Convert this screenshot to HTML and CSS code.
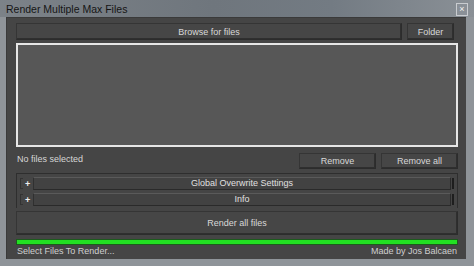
FILE: index.html
```html
<!DOCTYPE html>
<html>
<head>
<meta charset="utf-8">
<link rel="stylesheet" href="styles.css">
</head>
<body>
<div class="window">
  <div class="titlebar">
    <span class="title">Render Multiple Max Files</span>
    <span class="close">×</span>
  </div>
  <div class="frame">
    <div class="panel">
      <div class="row-top">
        <div class="btn browse">Browse for files</div>
        <div class="btn folder">Folder</div>
      </div>
      <div class="listbox"></div>
      <div class="row-mid">
        <span class="label">No files selected</span>
        <div class="btn remove">Remove</div>
        <div class="btn remove">Remove all</div>
      </div>
      <div class="rollouts">
        <div class="rollout"><span class="bracket"></span><span class="plus">+</span><span class="rtitle">Global Overwrite Settings</span><span class="rbar"></span></div>
        <div class="rollout"><span class="bracket"></span><span class="plus">+</span><span class="rtitle">Info</span><span class="rbar"></span></div>
      </div>
      <div class="btn render">Render all files</div>
      <div class="progress"><div class="fill"></div></div>
      <div class="status">
        <span>Select Files To Render...</span>
        <span>Made by Jos Balcaen</span>
      </div>
    </div>
  </div>
</div>
</body>
</html>
```
FILE: styles.css
```css
html, body {
  margin: 0;
  padding: 0;
}
body {
  width: 474px;
  height: 266px;
  overflow: hidden;
  background: #8e9398;
  font-family: "Liberation Sans", Arial, sans-serif;
  font-size: 9px;
}
.window {
  width: 474px;
  height: 266px;
  display: flex;
  flex-direction: column;
  background: #8f9499;
}
.titlebar {
  height: 17px;
  flex: none;
  display: flex;
  align-items: center;
  justify-content: space-between;
  padding: 0 6px 0 6px;
  background: linear-gradient(90deg, #7c8288 0%, #6f767d 45%, #737b83 70%, #8a9096 100%);
}
.title {
  color: #151515;
  font-size: 10.5px;
}
.close {
  width: 10px;
  height: 11px;
  margin-top: 2px;
  border: 1px solid #c9ccd0;
  background: #8a9097;
  color: #f2f2f2;
  font-size: 9px;
  line-height: 10px;
  text-align: center;
}
.frame {
  flex: 1;
  display: flex;
  padding: 0 8px 7px 6px;
}
.panel {
  flex: 1;
  display: flex;
  flex-direction: column;
  background: #454545;
  border-left: 1px solid #3a3a3a;
  border-top: 1px solid #3a3a3a;
  padding: 5px 8px 0 9px;
  color: #d6d6d6;
}
.btn {
  box-sizing: border-box;
  background: #464646;
  border: 1px solid #2c2c2c;
  border-top-color: #353535;
  border-left-color: #353535;
  box-shadow: inset -1px -1px 0 #2f2f2f;
  color: #d8d8d8;
  display: flex;
  align-items: center;
  justify-content: center;
}
.row-top {
  display: flex;
  gap: 5px;
  height: 17px;
  padding-right: 4px;
}
.browse {
  flex: 1;
}
.folder {
  width: 47px;
}
.listbox {
  margin-top: 3px;
  height: 104px;
  box-sizing: border-box;
  border: 2px solid #e6e6e6;
  background: #575757;
}
.row-mid {
  margin-top: 6px;
  height: 16px;
  display: flex;
  gap: 5px;
  align-items: center;
}
.label {
  flex: 1;
  margin-top: -4px;
  padding-left: 1px;
}
.remove {
  width: 77px;
  height: 16px;
}
.rollouts {
  margin-top: 4px;
  box-sizing: border-box;
  height: 35px;
  border: 1px solid #2e2e2e;
  border-bottom: none;
  padding: 3px 3px 0 3px;
  display: flex;
  flex-direction: column;
  gap: 3px;
}
.rollout {
  height: 13px;
  box-sizing: border-box;
  display: flex;
  align-items: center;
  position: relative;
  color: #e0e0e0;
}
.bracket {
  width: 3px;
  height: 11px;
  border: 1px solid #333;
  border-right: none;
  box-sizing: border-box;
  margin-right: 2px;
}
.plus {
  width: 8px;
  font-weight: bold;
  font-size: 9px;
  color: #f0f0f0;
  margin-right: 0;
}
.rtitle {
  flex: 1;
  height: 13px;
  box-sizing: border-box;
  border: 1px solid #5a5a5a;
  border-left: 1px solid #303030;
  border-right-color: #2a2a2a;
  border-bottom-color: #2a2a2a;
  background: #424242;
  display: flex;
  align-items: center;
  justify-content: center;
  line-height: 11px;
}
.rbar {
  width: 2px;
  height: 11px;
  margin-left: 1px;
  background: #1e1e1e;
}
.render {
  margin-top: 3px;
  height: 24px;
}
.progress {
  margin-top: 4px;
  height: 6px;
  box-sizing: border-box;
  border: 1px solid #1d5a1d;
  background: #1c4a1c;
}
.fill {
  height: 100%;
  background: #22e022;
}
.status {
  flex: 1;
  display: flex;
  justify-content: space-between;
  align-items: center;
  padding: 0 1px 2px 1px;
  color: #cfcfcf;
}
```
